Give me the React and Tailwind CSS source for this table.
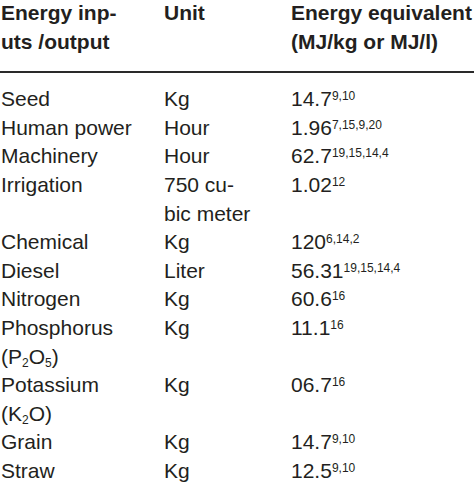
export default function App() {
    const rows = [
        { name: "Seed", unit: "Kg", value: "14.7", refs: "9,10" },
        { name: "Human power", unit: "Hour", value: "1.96", refs: "7,15,9,20" },
        { name: "Machinery", unit: "Hour", value: "62.7", refs: "19,15,14,4" },
        { name: "Irrigation", unit: <>750 cu-<br />bic meter</>, value: "1.02", refs: "12" },
        { name: "Chemical", unit: "Kg", value: "120", refs: "6,14,2" },
        { name: "Diesel", unit: "Liter", value: "56.31", refs: "19,15,14,4" },
        { name: "Nitrogen", unit: "Kg", value: "60.6", refs: "16" },
        { name: <>Phosphorus<br />(P<sub className="text-[12px]">2</sub>O<sub className="text-[12px]">5</sub>)</>, unit: "Kg", value: "11.1", refs: "16" },
        { name: <>Potassium<br />(K<sub className="text-[12px]">2</sub>O)</>, unit: "Kg", value: "06.7", refs: "16" },
        { name: "Grain", unit: "Kg", value: "14.7", refs: "9,10" },
        { name: "Straw", unit: "Kg", value: "12.5", refs: "9,10" },
    ]

    return (
        <div className="w-[474px] h-[484px] overflow-hidden bg-white text-[#231f20] text-[21px] leading-[28.6px] font-['Liberation_Sans',Arial,sans-serif]">
            <div className="grid grid-cols-[163px_127px_1fr] font-bold pl-[1px] -mt-[1px] pb-[15px]">
                <div>Energy inp-<br />uts /output</div>
                <div>Unit</div>
                <div className="whitespace-nowrap">Energy equivalent<br />(MJ/kg or MJ/l)</div>
            </div>
            <div className="h-[2px] bg-[#2a2a2a]"></div>
            <div className="grid grid-cols-[163px_127px_1fr] pl-[1px] pt-[12px]">
                {rows.map((r, i) => (
                    <div key={i} className="contents">
                        <div className="whitespace-nowrap">{r.name}</div>
                        <div className="whitespace-nowrap">{r.unit}</div>
                        <div className="whitespace-nowrap">
                            {r.value}
                            <sup className="text-[12px]">{r.refs}</sup>
                        </div>
                    </div>
                ))}
            </div>
        </div>
    )
}
